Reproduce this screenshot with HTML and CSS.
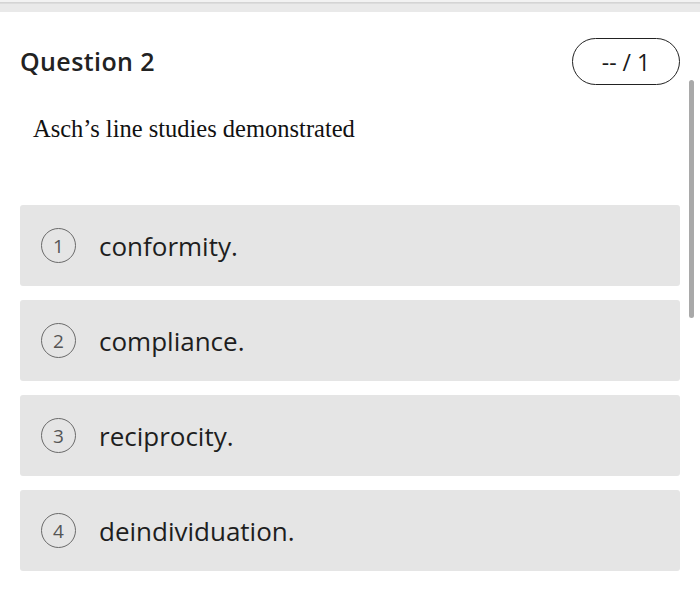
FILE: index.html
```html
<!DOCTYPE html>
<html>
<head>
<meta charset="utf-8">
<link rel="stylesheet" href="styles.css">
</head>
<body>
<div class="topband"></div>
<div class="page">
  <div class="header">
    <h2 class="title">Question 2</h2>
    <div class="score">-- / 1</div>
  </div>
  <p class="prompt">Asch’s line studies demonstrated</p>
  <div class="options">
    <div class="option"><span class="num">1</span><span class="label">conformity.</span></div>
    <div class="option"><span class="num">2</span><span class="label">compliance.</span></div>
    <div class="option"><span class="num">3</span><span class="label">reciprocity.</span></div>
    <div class="option"><span class="num">4</span><span class="label">deindividuation.</span></div>
  </div>
</div>
<div class="scrollbar"></div>
</body>
</html>
```
FILE: styles.css
```css
html, body {
  margin: 0;
  padding: 0;
  background: #ffffff;
}
body {
  font-family: "Open Sans", "Noto Sans", sans-serif;
  color: #222;
  width: 700px;
  height: 597px;
  overflow: hidden;
  position: relative;
}
.topband {
  height: 12px;
  background: #e9e9e9;
  border-top: 2px solid #f2f2f2;
  box-sizing: border-box;
  box-shadow: inset 0 1px 0 #d4d4d4, inset 0 2px 0 #dcdcdc;
}
.page {
  padding: 0 20px;
}
.header {
  display: flex;
  justify-content: space-between;
  align-items: center;
  margin-top: 26px;
  height: 47px;
}
.title {
  margin: 0;
  font-size: 25px;
  font-weight: 600;
  color: #222;
  letter-spacing: 0.4px;
  line-height: 1;
}
.score {
  box-sizing: border-box;
  width: 108px;
  height: 47px;
  border: 1.5px solid #222;
  border-radius: 24px;
  display: flex;
  align-items: center;
  justify-content: center;
  font-size: 23px;
  color: #1a1a1a;
}
.prompt {
  margin: 0;
  padding: 0 0 0 13px;
  margin-top: 29px;
  font-family: "Liberation Serif", "Times New Roman", serif;
  font-size: 24.5px;
  line-height: 30px;
  color: #111;
}
.options {
  margin-top: 61px;
  display: flex;
  flex-direction: column;
  gap: 14px;
}
.option {
  height: 81px;
  background: #e5e5e5;
  border-radius: 3px;
  display: flex;
  align-items: center;
  padding-left: 21px;
}
.num {
  box-sizing: border-box;
  width: 35px;
  height: 35px;
  border: 1.5px solid #6a6a6a;
  border-radius: 50%;
  display: flex;
  align-items: center;
  justify-content: center;
  font-size: 19px;
  color: #555;
  flex-shrink: 0;
}
.label {
  margin-left: 23px;
  font-size: 26px;
  color: #1e1e1e;
}
.scrollbar {
  position: absolute;
  left: 689px;
  top: 80px;
  width: 5px;
  height: 238px;
  border-radius: 3px;
  background: #a9a9a9;
}
```
